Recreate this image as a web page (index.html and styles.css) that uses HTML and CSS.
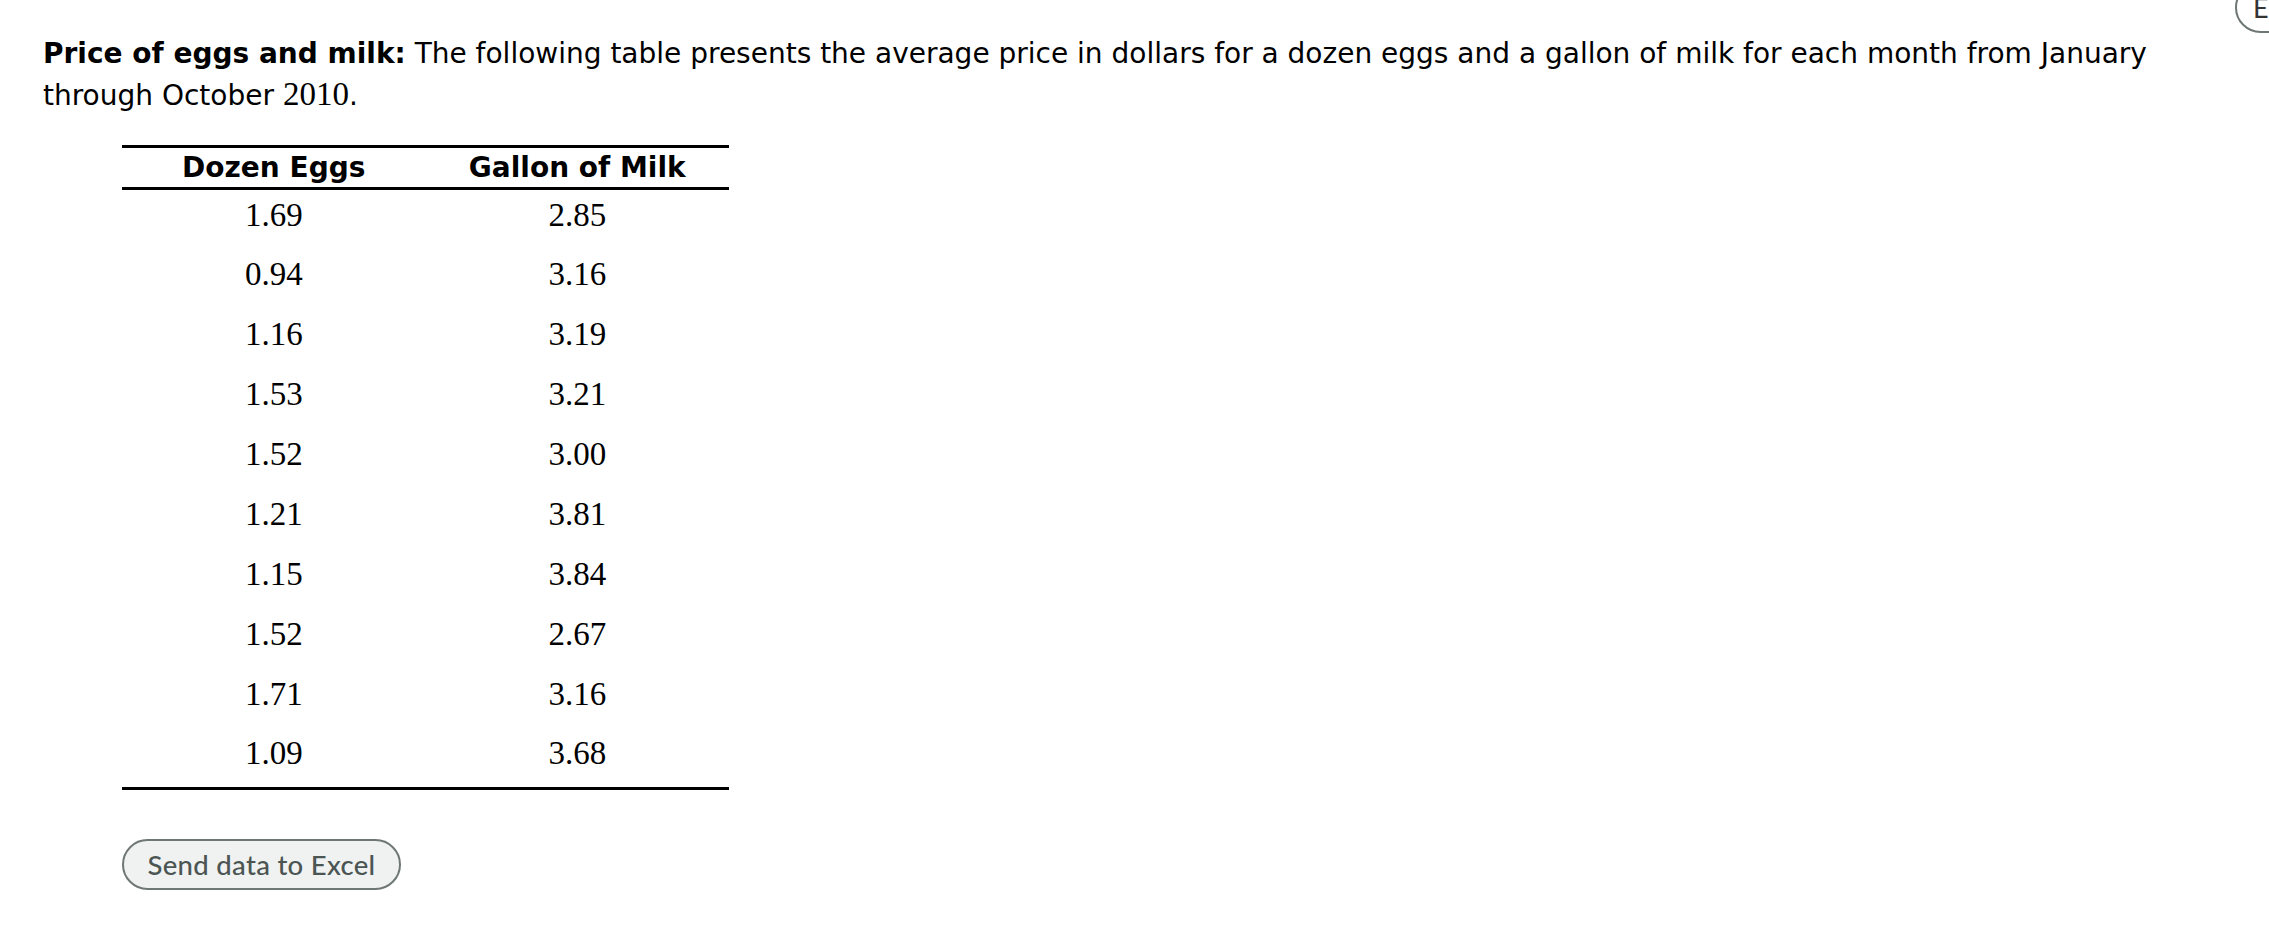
FILE: index.html
```html
<!DOCTYPE html>
<html lang="en">
<head>
<meta charset="utf-8">
<title>Price of eggs and milk</title>
<link rel="stylesheet" href="styles.css">
</head>
<body>
<button class="lang-btn" type="button">Español</button>
<main class="page">
  <p class="intro"><strong>Price of eggs and milk:</strong> The following table presents the average price in dollars for a dozen eggs and a gallon of milk for each month from January through October <span class="num">2010</span>.</p>
  <table class="data">
    <thead>
      <tr><th>Dozen Eggs</th><th>Gallon of Milk</th></tr>
    </thead>
    <tbody>
      <tr><td>1.69</td><td>2.85</td></tr>
      <tr><td>0.94</td><td>3.16</td></tr>
      <tr><td>1.16</td><td>3.19</td></tr>
      <tr><td>1.53</td><td>3.21</td></tr>
      <tr><td>1.52</td><td>3.00</td></tr>
      <tr><td>1.21</td><td>3.81</td></tr>
      <tr><td>1.15</td><td>3.84</td></tr>
      <tr><td>1.52</td><td>2.67</td></tr>
      <tr><td>1.71</td><td>3.16</td></tr>
      <tr><td>1.09</td><td>3.68</td></tr>
    </tbody>
  </table>
  <button class="excel-btn" type="button">Send data to Excel</button>
</main>
</body>
</html>
```

FILE: styles.css
```css
html, body {
  margin: 0;
  padding: 0;
  overflow: hidden;
  background: #ffffff;
}

body {
  position: relative;
  width: 2269px;
  height: 930px;
  font-family: "DejaVu Sans", Verdana, sans-serif;
  color: #000;
}

.page {
  padding: 33px 0 0 43px;
}

.intro {
  margin: 0;
  width: 2180px;
  font-size: 28px;
  line-height: 42px;
}

.intro strong {
  font-weight: bold;
}

.intro .num {
  font-family: "Liberation Serif", "Times New Roman", serif;
  font-size: 33px;
  line-height: 1;
}

.data {
  margin: 28px 0 0 79px;
  width: 607px;
  border-collapse: collapse;
  table-layout: fixed;
  border-top: 3px solid #000;
  border-bottom: 3px solid #000;
}

.data th {
  width: 50%;
  height: 42px;
  padding: 0;
  font-family: "DejaVu Sans", Verdana, sans-serif;
  font-weight: bold;
  font-size: 28px;
  line-height: 30px;
  text-align: center;
  vertical-align: middle;
  border-bottom: 3px solid #000;
  box-sizing: border-box;
}

.data td {
  height: 60px;
  padding: 0 0 8px;
  font-family: "Liberation Serif", "Times New Roman", serif;
  font-size: 33px;
  text-align: center;
  vertical-align: middle;
  box-sizing: border-box;
}

.excel-btn {
  display: block;
  margin: 49px 0 0 79px;
  width: 279px;
  height: 51px;
  padding: 0;
  border: 2px solid #6e7775;
  border-radius: 26px;
  background: #f0f2f1;
  color: #4b5553;
  font-family: Lato, "Open Sans", sans-serif;
  font-size: 27.5px;
  letter-spacing: 0.3px;
  font-weight: 500;
  cursor: pointer;
}

.lang-btn {
  position: absolute;
  top: -18px;
  left: 2235px;
  height: 51px;
  padding: 0 20px 0 16px;
  border: 2px solid #6e7775;
  border-radius: 26px;
  background: #ffffff;
  color: #333;
  font-family: Lato, "Open Sans", sans-serif;
  font-size: 27px;
  white-space: nowrap;
}
```
